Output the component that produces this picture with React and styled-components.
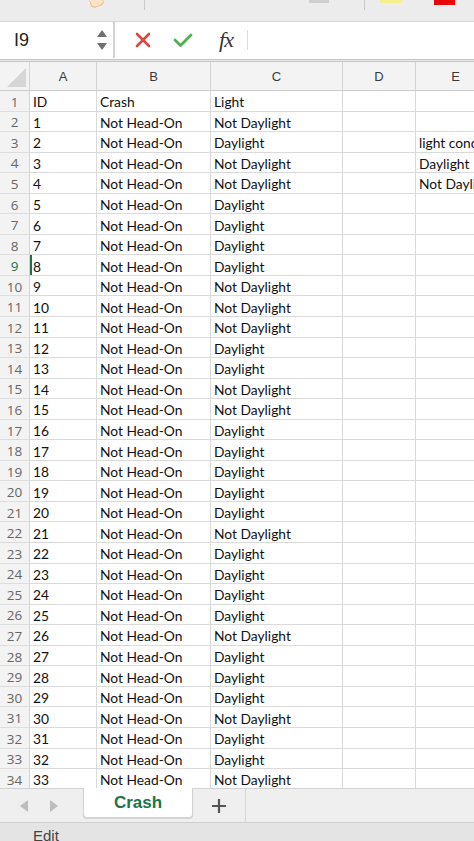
import React from 'react'
import styled, { createGlobalStyle } from 'styled-components'

const GlobalStyle = createGlobalStyle`
  html, body {
    margin: 0;
    padding: 0;
    background: #fff;
    overflow: hidden;
  }
  body {
    font-family: Lato, "Open Sans", sans-serif;
  }
`

const Screen = styled.div`
  width: 474px;
  height: 841px;
  display: flex;
  flex-direction: column;
  overflow: hidden;
`

const Toolbar = styled.div`
  height: 21px;
  flex: none;
  background: #ececec;
  border-bottom: 1px solid #d4d4d4;
  display: flex;
  align-items: flex-start;
`

const ToolMark = styled.div`
  flex: none;
  margin-left: ${p => p.$gap}px;
  width: ${p => p.$w}px;
  height: ${p => p.$h}px;
  background: ${p => p.$color};
`

const Pencil = styled.div`
  flex: none;
  margin-left: 90px;
  width: 12px;
  height: 8px;
  border: 1px solid #f0b47a;
  border-top: none;
  border-radius: 0 0 5px 5px;
  background: #fbe3c8;
  transform: rotate(-20deg);
  margin-top: -2px;
`

const ToolDivider = styled.div`
  flex: none;
  margin-left: ${p => p.$gap}px;
  width: 1px;
  height: 10px;
  background: #c9c9c9;
`

const FormulaBar = styled.div`
  height: 36px;
  flex: none;
  display: flex;
  align-items: center;
  background: #fff;
`

const NameBox = styled.div`
  width: 115px;
  height: 100%;
  flex: none;
  display: flex;
  align-items: center;
  justify-content: space-between;
  padding: 0 6px 0 14px;
  box-sizing: border-box;
  font-family: "Liberation Sans", Arial, sans-serif;
  font-size: 18px;
  color: #222;
  border-right: 2px solid #d2d2d2;
`

const Spinner = styled.div`
  display: flex;
  flex-direction: column;
  gap: 6px;
`

const Arrow = styled.div`
  width: 0;
  height: 0;
  border-left: 5px solid transparent;
  border-right: 5px solid transparent;
  ${p => p.$down ? 'border-top: 7px solid #6f6f6f;' : 'border-bottom: 7px solid #6f6f6f;'}
`

const FormulaTools = styled.div`
  display: flex;
  align-items: center;
  height: 100%;
  padding-left: 18px;
`

const IconSlot = styled.div`
  width: ${p => p.$w}px;
  display: flex;
  justify-content: center;
  align-items: center;
`

const Fx = styled.span`
  font-family: "Liberation Serif", "DejaVu Serif", serif;
  font-style: italic;
  font-size: 22px;
  color: #333;
  letter-spacing: -1px;
`

const FormulaDivider = styled.div`
  width: 1px;
  height: 20px;
  background: #dcdcdc;
  margin-left: 8px;
`

const Separator = styled.div`
  height: 4px;
  flex: none;
  background: linear-gradient(#fff 0 1px, #c4c4c4 1px 2px, #e9e9e9 2px 3px, #c4c4c4 3px 4px);
`

const SheetArea = styled.div`
  flex: 1;
  overflow: hidden;
`

const Grid = styled.div`
  display: grid;
  grid-template-columns: 30px 67px 114px 132px 73px 80px;
  grid-template-rows: 29px;
  grid-auto-rows: 20.55px;
  width: 496px;
`

const HeadCell = styled.div`
  background: #f3f3f3;
  border-right: 1px solid #d3d3d3;
  border-bottom: 1px solid #cdcdcd;
  display: flex;
  align-items: center;
  justify-content: center;
  font-family: "Liberation Sans", Arial, sans-serif;
  font-size: 13px;
  color: #3a3a3a;
  box-sizing: border-box;
`

const Corner = styled(HeadCell)`
  align-items: flex-end;
  justify-content: flex-end;
  padding: 0 3px 3px 0;
`

const RowHead = styled.div`
  background: #f3f3f3;
  border-right: 1px solid #d3d3d3;
  border-bottom: 1px solid #dddddd;
  display: flex;
  align-items: center;
  justify-content: center;
  padding-top: 2px;
  font-family: "Open Sans", Lato, sans-serif;
  font-size: 13.5px;
  color: ${p => p.$active ? '#217346' : '#666'};
  box-sizing: border-box;
`

const Cell = styled.div`
  border-right: 1px solid #dadada;
  border-bottom: 1px solid #dadada;
  box-sizing: border-box;
  display: flex;
  align-items: center;
  padding: 2px 0 0 3px;
  font-family: Lato, "Open Sans", sans-serif;
  font-size: 13.8px;
  color: #111;
  white-space: nowrap;
  overflow: hidden;
  box-shadow: ${p => p.$mark ? 'inset 2px 0 0 #217346' : 'none'};
`

const TabBar = styled.div`
  height: 35px;
  flex: none;
  background: #efefef;
  border-top: 1px solid #d2d2d2;
  border-bottom: 1px solid #cfcfcf;
  box-sizing: border-box;
  display: flex;
  align-items: stretch;
`

const NavArrows = styled.div`
  width: 83px;
  display: flex;
  align-items: center;
  padding-left: 20px;
  gap: 22px;
  box-sizing: border-box;
`

const NavArrow = styled.div`
  width: 0;
  height: 0;
  border-top: 6px solid transparent;
  border-bottom: 6px solid transparent;
  ${p => p.$left ? 'border-right: 8px solid #bdbdbd;' : 'border-left: 8px solid #bdbdbd;'}
`

const SheetTab = styled.div`
  width: 108px;
  margin-top: -1px;
  margin-bottom: 4px;
  background: #fff;
  border: 1px solid #d2d2d2;
  border-top: none;
  border-radius: 0 0 4px 4px;
  box-shadow: 0 1px 1px rgba(0, 0, 0, 0.12);
  display: flex;
  align-items: center;
  justify-content: center;
  font-family: "Liberation Sans", Arial, sans-serif;
  font-weight: bold;
  font-size: 17px;
  color: #217346;
`

const AddTab = styled.div`
  width: 52px;
  display: flex;
  align-items: center;
  justify-content: center;
  border-right: 1px solid #d6d6d6;
  color: #555;
`

const BottomBar = styled.div`
  height: 18px;
  flex: none;
  background: #e4e4e4;
  padding-left: 33px;
  font-family: "Liberation Sans", Arial, sans-serif;
  font-size: 15px;
  color: #444;
  line-height: 26px;
  overflow: hidden;
`

const lights = [
  'Not Daylight', 'Daylight', 'Not Daylight', 'Not Daylight', 'Daylight', 'Daylight', 'Daylight',
  'Daylight', 'Not Daylight', 'Not Daylight', 'Not Daylight', 'Daylight', 'Daylight', 'Not Daylight',
  'Not Daylight', 'Daylight', 'Daylight', 'Daylight', 'Daylight', 'Daylight', 'Not Daylight',
  'Daylight', 'Daylight', 'Daylight', 'Daylight', 'Not Daylight', 'Daylight', 'Daylight',
  'Daylight', 'Not Daylight', 'Daylight', 'Daylight', 'Not Daylight',
]

const extraE = { 3: 'light conditions', 4: 'Daylight', 5: 'Not Daylight' }

const rows = [
  ['ID', 'Crash', 'Light'],
  ...lights.map((l, i) => [String(i + 1), 'Not Head-On', l]),
]

export default function App() {
  return (
    <Screen>
      <GlobalStyle />
      <Toolbar>
        <Pencil />
        <ToolDivider $gap={40} />
        <ToolMark $gap={164} $w={20} $h={3} $color="#cfcfcf" />
        <ToolDivider $gap={35} />
        <ToolMark $gap={15} $w={22} $h={3} $color="#f7f08a" />
        <ToolMark $gap={32} $w={21} $h={5} $color="#e8000b" />
      </Toolbar>

      <FormulaBar>
        <NameBox>
          I9
          <Spinner>
            <Arrow />
            <Arrow $down />
          </Spinner>
        </NameBox>
        <FormulaTools>
          <IconSlot $w={20}>
            <svg width="16" height="16" viewBox="0 0 16 16">
              <path d="M2 2 L14 14 M14 2 L2 14" stroke="#d9473f" strokeWidth="2.6" strokeLinecap="round" />
            </svg>
          </IconSlot>
          <IconSlot $w={60}>
            <svg width="20" height="16" viewBox="0 0 20 16">
              <path d="M2 8 L7.5 13.5 L18 3" stroke="#4caf50" strokeWidth="2.8" fill="none" strokeLinecap="round" strokeLinejoin="round" />
            </svg>
          </IconSlot>
          <IconSlot $w={26}>
            <Fx>fx</Fx>
          </IconSlot>
          <FormulaDivider />
        </FormulaTools>
      </FormulaBar>

      <Separator />

      <SheetArea>
        <Grid>
          <Corner>
            <svg width="19" height="19" viewBox="0 0 19 19">
              <polygon points="19,0 19,19 0,19" fill="#d6d6d6" />
            </svg>
          </Corner>
          {['A', 'B', 'C', 'D', 'E'].map(c => (
            <HeadCell key={c}>{c}</HeadCell>
          ))}
          {rows.map((r, i) => {
            const n = i + 1
            return (
              <React.Fragment key={n}>
                <RowHead $active={n === 9}>{n}</RowHead>
                <Cell $mark={n === 9}>{r[0]}</Cell>
                <Cell>{r[1]}</Cell>
                <Cell>{r[2]}</Cell>
                <Cell />
                <Cell>{extraE[n] || ''}</Cell>
              </React.Fragment>
            )
          })}
        </Grid>
      </SheetArea>

      <TabBar>
        <NavArrows>
          <NavArrow $left />
          <NavArrow />
        </NavArrows>
        <SheetTab>Crash</SheetTab>
        <AddTab>
          <svg width="16" height="16" viewBox="0 0 16 16">
            <path d="M8 1 V15 M1 8 H15" stroke="#555" strokeWidth="2.2" />
          </svg>
        </AddTab>
      </TabBar>
      <BottomBar>Edit</BottomBar>
    </Screen>
  )
}
